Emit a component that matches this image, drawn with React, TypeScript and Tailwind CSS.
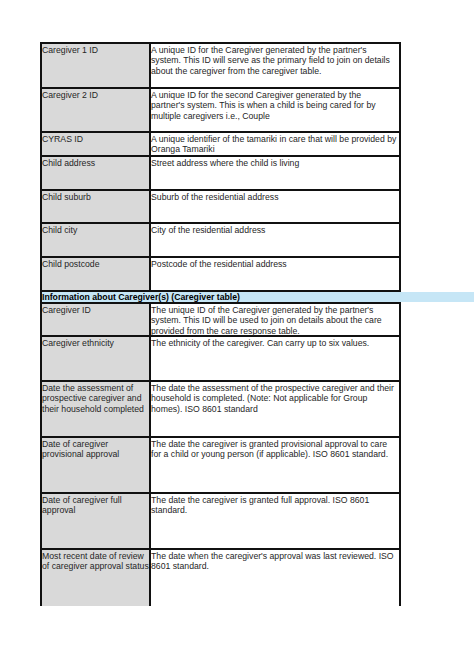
import React from 'react';

type Row = {
  label: string[];
  desc: string[];
  h: number;
};

const hClass: Record<number, string> = {
  24: 'h-[24px]',
  33: 'h-[33px]',
  34: 'h-[34px]',
  44: 'h-[44px]',
  45: 'h-[45px]',
  56: 'h-[56px]',
};

const childRows: Row[] = [
  {
    label: ['Caregiver 1 ID'],
    desc: [
      "A unique ID for the Caregiver generated by the partner's",
      'system. This ID will serve as the primary field to join on details',
      'about the caregiver from the caregiver table.',
    ],
    h: 45,
  },
  {
    label: ['Caregiver 2 ID'],
    desc: [
      'A unique ID for the second Caregiver generated by the',
      "partner's system. This is when a child is being cared for by",
      'multiple caregivers i.e., Couple',
    ],
    h: 44,
  },
  {
    label: ['CYRAS ID'],
    desc: ['A unique identifier of the tamariki in care that will be provided by', 'Oranga Tamariki'],
    h: 24,
  },
  { label: ['Child address'], desc: ['Street address where the child is living'], h: 34 },
  { label: ['Child suburb'], desc: ['Suburb of the residential address'], h: 33 },
  { label: ['Child city'], desc: ['City of the residential address'], h: 34 },
  { label: ['Child postcode'], desc: ['Postcode of the residential address'], h: 34 },
];

const caregiverRows: Row[] = [
  {
    label: ['Caregiver ID'],
    desc: [
      "The unique ID of the Caregiver generated by the partner's",
      'system. This ID will be used to join on details about the care',
      'provided from the care response table.',
    ],
    h: 33,
  },
  { label: ['Caregiver ethnicity'], desc: ['The ethnicity of the caregiver. Can carry up to six values.'], h: 45 },
  {
    label: ['Date the assessment of', 'prospective caregiver and', 'their household completed'],
    desc: [
      'The date the assessment of the prospective caregiver and their',
      'household is completed. (Note: Not applicable for Group',
      'homes). ISO 8601 standard',
    ],
    h: 56,
  },
  {
    label: ['Date of caregiver', 'provisional approval'],
    desc: [
      'The date the caregiver is granted provisional approval to care',
      'for a child or young person (if applicable). ISO 8601 standard.',
    ],
    h: 56,
  },
  {
    label: ['Date of caregiver full', 'approval'],
    desc: ['The date the caregiver is granted full approval. ISO 8601', 'standard.'],
    h: 56,
  },
];

const lastRow: Row = {
  label: ['Most recent date of review', 'of caregiver approval status'],
  desc: ["The date when the caregiver's approval was last reviewed. ISO", '8601 standard.'],
  h: 56,
};

function Lines({ lines }: { lines: string[] }) {
  return (
    <>
      {lines.map((l, i) => (
        <div key={i} className="whitespace-nowrap">
          {l}
        </div>
      ))}
    </>
  );
}

function TableRow({ row, last = false }: { row: Row; last?: boolean }) {
  return (
    <div className={`flex w-[361px] border-x-2 border-[#111] ${last ? '' : 'border-b-2'} ${hClass[row.h]}`}>
      <div className="relative z-10 w-[109px] shrink-0 bg-[#d9d9d9] border-r-2 border-[#111] pt-px">
        <Lines lines={row.label} />
      </div>
      <div className="flex-1 pt-px">
        <Lines lines={row.desc} />
      </div>
    </div>
  );
}

export default function App() {
  return (
    <div className="w-[474px] h-[669px] bg-white overflow-hidden font-['Liberation_Sans',Arial,sans-serif] text-[8.7px] leading-[10.4px] text-[#262626]">
      <div className="pt-[42px] pl-[40px]">
        <div className="w-[361px] border-t-2 border-[#111]" />
        {childRows.map((r) => (
          <TableRow key={r.label.join(' ')} row={r} />
        ))}
        <div className="flex w-[434px] h-[10px] bg-[#c6e6f6]">
          <div className="w-[361px] border-l-2 border-[#111] font-bold text-black leading-[10px]">
            Information about Caregiver(s) (Caregiver table)
          </div>
        </div>
        <div className="w-[361px] border-t-2 border-[#111]" />
        {caregiverRows.map((r) => (
          <TableRow key={r.label.join(' ')} row={r} />
        ))}
        <TableRow row={lastRow} last />
      </div>
    </div>
  );
}
